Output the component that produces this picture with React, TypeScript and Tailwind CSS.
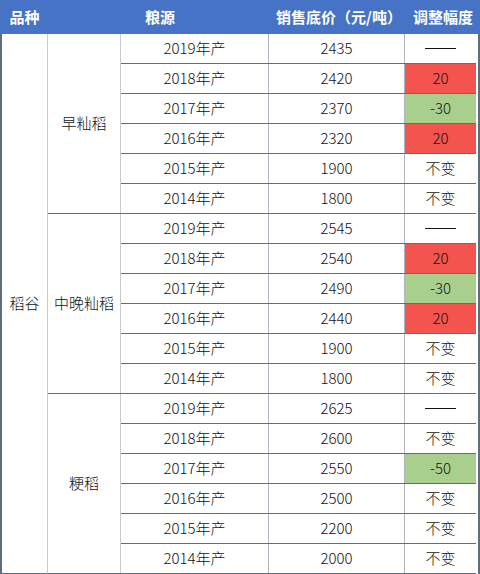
import React from 'react';

type Adj = { kind: 'dash' | 'red' | 'green' | 'same'; text?: string };
type Row = [string, string, Adj];

const dash: Adj = { kind: 'dash' };
const same: Adj = { kind: 'same', text: '不变' };
const red: Adj = { kind: 'red', text: '20' };
const g30: Adj = { kind: 'green', text: '-30' };
const g50: Adj = { kind: 'green', text: '-50' };

const groups: { name: string; rows: Row[] }[] = [
  {
    name: '早籼稻',
    rows: [
      ['2019年产', '2435', dash],
      ['2018年产', '2420', red],
      ['2017年产', '2370', g30],
      ['2016年产', '2320', red],
      ['2015年产', '1900', same],
      ['2014年产', '1800', same],
    ],
  },
  {
    name: '中晚籼稻',
    rows: [
      ['2019年产', '2545', dash],
      ['2018年产', '2540', red],
      ['2017年产', '2490', g30],
      ['2016年产', '2440', red],
      ['2015年产', '1900', same],
      ['2014年产', '1800', same],
    ],
  },
  {
    name: '粳稻',
    rows: [
      ['2019年产', '2625', dash],
      ['2018年产', '2600', same],
      ['2017年产', '2550', g50],
      ['2016年产', '2500', same],
      ['2015年产', '2200', same],
      ['2014年产', '2000', same],
    ],
  },
];

function AdjCell({ a }: { a: Adj }) {
  if (a.kind === 'dash') {
    return (
      <div className="w-[71px] flex items-center justify-center">
        <div className="w-[31px] h-px bg-[#111]" />
      </div>
    );
  }
  const bg =
    a.kind === 'red' ? 'bg-[#f3554e]' : a.kind === 'green' ? 'bg-[#a9cf8e]' : 'bg-white';
  return (
    <div className={`w-[71px] flex items-center justify-center ${bg}`}>{a.text}</div>
  );
}

export default function App() {
  return (
    <div
      className="w-[480px] h-[574px] bg-white text-[15px] font-light text-[#111] overflow-hidden"
      style={{ fontFamily: '"Noto Sans CJK SC", "Noto Sans", sans-serif' }}
    >
      <div className="h-[34px] bg-[#4673c5] text-white font-bold flex items-center">
        <div className="w-[49px] text-center">品种</div>
        <div className="w-[222px] text-center">粮源</div>
        <div className="w-[136px] text-center whitespace-nowrap">销售底价（元/吨）</div>
        <div className="w-[72px] text-center whitespace-nowrap">调整幅度</div>
      </div>
      <div className="flex h-[540px] border-l-2 border-r-2 border-[#5f6e7d] w-[480px]">
        <div className="w-[46px] border-r border-b border-r-[#c9cccf] border-b-[#5f6e7d] flex items-center justify-center">
          稻谷
        </div>
        <div className="flex flex-col">
          {groups.map((g) => (
            <div key={g.name} className="flex h-[180px] border-b border-[#5f6e7d]">
              <div className="w-[73px] border-r border-[#c9cccf] flex items-center justify-center whitespace-nowrap">
                {g.name}
              </div>
              <div className="flex flex-col">
                {g.rows.map((r, i) => (
                  <div
                    key={i}
                    className={`flex flex-1 ${i < 5 ? 'border-b border-[#5f6e7d]' : ''}`}
                  >
                    <div className="w-[148px] border-r border-[#aeb5bc] flex items-center justify-center">
                      {r[0]}
                    </div>
                    <div className="w-[136px] border-r border-[#aeb5bc] flex items-center justify-center">
                      {r[1]}
                    </div>
                    <AdjCell a={r[2]} />
                  </div>
                ))}
              </div>
            </div>
          ))}
        </div>
      </div>
    </div>
  );
}
